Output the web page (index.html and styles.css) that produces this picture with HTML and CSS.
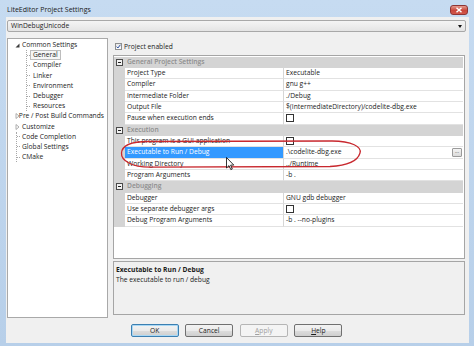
FILE: index.html
```html
<!DOCTYPE html>
<html lang="en">
<head>
    <meta charset="UTF-8">
    <title>LiteEditor Project Settings</title>
    <link rel="stylesheet" href="styles.css">
</head>
<body>

<div class="window">

  <div class="titlebar">
    <span class="title">LiteEditor Project Settings</span>
    <span class="close">
      <svg width="8" height="6" viewBox="0 0 8 6"><path d="M1.5 0.8 L6.5 5.2 M6.5 0.8 L1.5 5.2" stroke="#fff" stroke-width="1.5"/></svg>
    </span>
  </div>

  <div class="client">

    <div class="combo">
      <span>WinDebugUnicode</span>
      <span class="combo__arrow"></span>
    </div>

    <div class="main">

      <div class="tree">
        <div class="node node--root">
          <span class="exp">
            <svg width="5" height="5" viewBox="0 0 5 5"><path d="M4.5 0.5 L4.5 4.5 L0.5 4.5 Z" fill="#3c3c3c"/></svg>
          </span>
          <span class="node__text">Common Settings</span>
        </div>
        <div class="children">
          <div class="node node--child"><span class="node__text node__text--selected">General</span></div>
          <div class="node node--child"><span class="node__text">Compiler</span></div>
          <div class="node node--child"><span class="node__text">Linker</span></div>
          <div class="node node--child"><span class="node__text">Environment</span></div>
          <div class="node node--child"><span class="node__text">Debugger</span></div>
          <div class="node node--child"><span class="node__text">Resources</span></div>
        </div>
        <div class="node node--root">
          <span class="exp">
            <svg width="5" height="6" viewBox="0 0 5 6"><path d="M1 0.5 L4 3 L1 5.5 Z" fill="none" stroke="#9a9a9a" stroke-width="0.8"/></svg>
          </span>
          <span class="node__text">Pre / Post Build Commands</span>
        </div>
        <div class="node node--root">
          <span class="exp">
            <svg width="5" height="6" viewBox="0 0 5 6"><path d="M1 0.5 L4 3 L1 5.5 Z" fill="none" stroke="#9a9a9a" stroke-width="0.8"/></svg>
          </span>
          <span class="node__text">Customize</span>
        </div>
        <div class="tree-tail">
          <div class="node node--leaf"><span class="node__text">Code Completion</span></div>
          <div class="node node--leaf"><span class="node__text">Global Settings</span></div>
          <div class="node node--leaf"><span class="node__text">CMake</span></div>
        </div>
      </div>

      <div class="side">

        <div class="check-row">
          <span class="checkbox">
            <svg width="5" height="5" viewBox="0 0 5 5"><path d="M0.6 2.6 L1.9 4 L4.4 0.8" fill="none" stroke="#2a4fa0" stroke-width="1"/></svg>
          </span>
          Project enabled
        </div>

        <div class="grid">
          <div class="row row--cat">
            <span class="gutter"><span class="toggle"></span></span>
            <span class="cat">General Project Settings</span>
          </div>
          <div class="row"><span class="gutter"></span><span class="label">Project Type</span><span class="value">Executable</span></div>
          <div class="row"><span class="gutter"></span><span class="label">Compiler</span><span class="value">gnu g++</span></div>
          <div class="row"><span class="gutter"></span><span class="label">Intermediate Folder</span><span class="value">./Debug</span></div>
          <div class="row"><span class="gutter"></span><span class="label">Output File</span><span class="value">$(IntermediateDirectory)/codelite-dbg.exe</span></div>
          <div class="row"><span class="gutter"></span><span class="label">Pause when execution ends</span><span class="value"><span class="box"></span></span></div>

          <div class="row row--cat">
            <span class="gutter"><span class="toggle"></span></span>
            <span class="cat">Execution</span>
          </div>
          <div class="row"><span class="gutter"></span><span class="label">This program is a GUI application</span><span class="value"><span class="box"></span></span></div>
          <div class="row"><span class="gutter"></span><span class="label label--selected">Executable to Run / Debug</span><span class="value">.\codelite-dbg.exe<span class="dots">...</span></span></div>
          <div class="row"><span class="gutter"></span><span class="label">Working Directory</span><span class="value">../Runtime</span></div>
          <div class="row"><span class="gutter"></span><span class="label">Program Arguments</span><span class="value">-b .</span></div>

          <div class="row row--cat">
            <span class="gutter"><span class="toggle"></span></span>
            <span class="cat">Debugging</span>
          </div>
          <div class="row"><span class="gutter"></span><span class="label">Debugger</span><span class="value">GNU gdb debugger</span></div>
          <div class="row"><span class="gutter"></span><span class="label">Use separate debugger args</span><span class="value"><span class="box"></span></span></div>
          <div class="row"><span class="gutter"></span><span class="label">Debug Program Arguments</span><span class="value">-b . --no-plugins</span></div>
        </div>

        <div class="desc">
          <div class="desc__title">Executable to Run / Debug</div>
          <div>The executable to run / debug</div>
        </div>

      </div>
    </div>

    <div class="buttons">
      <button class="btn btn--default">OK</button>
      <button class="btn">Cancel</button>
      <button class="btn btn--disabled"><u>A</u>pply</button>
      <button class="btn"><u>H</u>elp</button>
    </div>

  </div>

  <!-- red marker drawn over the screenshot -->
  <svg class="marker" width="474" height="346" viewBox="0 0 474 346">
    <path d="M148 141.5 L332 141 C352 141 362 147 360 153 C358 160 350 165.5 330 166.5 L150 167.2 C131 167.2 121 160 121.5 153 C122 146 131 141.6 148 141.5 Z"
          fill="none" stroke="#c8282e" stroke-width="1.3"/>
  </svg>

  <svg class="pointer" width="9" height="14" viewBox="0 0 9 14">
    <path d="M0.5 0.5 L0.5 11 L3 8.6 L4.8 12.6 L6.3 12 L4.6 8.1 L7.8 8.1 Z" fill="#fff" stroke="#000" stroke-width="0.8"/>
  </svg>

</div>

</body>
</html>
```

FILE: styles.css
```css
*,
*::before,
*::after {
  box-sizing: border-box;
}

html,
body {
  margin: 0;
}

body {
  width: 474px;
  height: 346px;
  overflow: hidden;
  font-family: "Segoe UI", "Open Sans", sans-serif;
  font-size: 6.7px;
  color: #1b1b1b;
  background: #b9d1ea;
}

.window {
  position: relative;
  width: 474px;
  height: 346px;
  display: flex;
  flex-direction: column;
  background: linear-gradient(#c6dbf1, #b7cfe9);
}

.titlebar {
  height: 17px;
  display: flex;
  justify-content: space-between;
  padding: 0 6px 0 7px;
}

.title {
  font-size: 7px;
  line-height: 10px;
  padding-top: 5px;
  color: #1a1a1a;
}

.close {
  margin-top: 5px;
  width: 18px;
  height: 10px;
  border: 1px solid #8d3434;
  border-radius: 3px;
  background: linear-gradient(#e49a8e, #c9463b 55%, #d2574a);
  display: flex;
  align-items: center;
  justify-content: center;
}

.client {
  flex: 1;
  margin: 0 5px 3px 6px;
  padding: 3px 3px 6px 1px;
  background: #f0f0f0;
  display: flex;
  flex-direction: column;
}

/* configuration combo */

.combo {
  height: 12px;
  border: 1px solid #a8a8a8;
  border-radius: 2px;
  background: linear-gradient(#f4f4f4, #e4e4e4);
  display: flex;
  align-items: center;
  justify-content: space-between;
  padding: 0 3px 0 3px;
  line-height: 10px;
}

.combo__arrow {
  width: 0;
  height: 0;
  border-left: 2.5px solid transparent;
  border-right: 2.5px solid transparent;
  border-top: 3px solid #111;
}

.main {
  display: flex;
  margin-top: 6px;
  height: 280px;
}

/* tree */

.tree {
  width: 101px;
  height: 280px;
  background: #fff;
  border: 1px solid #a9a9a9;
  padding-top: 1px;
}

.node {
  height: 10.2px;
  line-height: 10.2px;
  display: flex;
  align-items: center;
  white-space: nowrap;
}

.node__text {
  padding: 0 2px;
  border: 1px solid transparent;
  line-height: 8px;
}

.node--root .exp {
  width: 9px;
  margin-left: 7px;
  display: flex;
  align-items: center;
}

.node--root .node__text {
  margin-left: -5px;
}

.children {
  margin-left: 18px;
  border-left: 1px dotted #a8a8a8;
}

.node--child::before,
.node--leaf::before {
  content: "";
  width: 3px;
  border-top: 1px dotted #a8a8a8;
}

.node__text--selected {
  border-color: #bdbdbd;
  background: #f6f6f6;
}

.tree-tail {
  margin-left: 8px;
  border-left: 1px dotted #a8a8a8;
}

.node--leaf .node__text {
  margin-left: -1px;
}

/* right side */

.side {
  margin-left: 5px;
  width: 352px;
  padding-top: 3px;
  display: flex;
  flex-direction: column;
}

.check-row {
  height: 10px;
  margin-bottom: 4px;
  padding-left: 2px;
  display: flex;
  align-items: center;
  gap: 2px;
}

.checkbox {
  width: 7px;
  height: 7px;
  border: 1px solid #8e8f8f;
  background: linear-gradient(#e8e8e8, #fdfdfd);
  display: flex;
  align-items: center;
  justify-content: center;
}

.grid {
  height: 204px;
  border: 1px solid #a5a5a5;
  background: #fff;
  padding: 0.6px 1px 0 0;
}

.row {
  height: 11.33px;
  display: flex;
  line-height: 10.3px;
  white-space: nowrap;
}

.gutter {
  width: 11px;
  flex: none;
  background: #d4d4d4;
  display: flex;
  align-items: center;
  justify-content: center;
}

.toggle {
  width: 7px;
  height: 7px;
  border: 1px solid #4a4a4a;
  background: #f2f2f2;
  position: relative;
}

.toggle::after {
  content: "";
  position: absolute;
  left: 1px;
  right: 1px;
  top: 2px;
  height: 1px;
  background: #222;
}

.row--cat .cat {
  flex: 1;
  background: #d4d4d4;
  color: #8e8e8e;
  font-weight: 600;
  padding-left: 2px;
}

.label {
  width: 159px;
  flex: none;
  padding-left: 2px;
  border-right: 1px solid #d6d6d6;
  border-bottom: 1px solid #e2e2e2;
  overflow: hidden;
}

.label--selected {
  background: #3399ff;
  color: #fff;
}

.value {
  flex: 1;
  padding-left: 2px;
  border-bottom: 1px solid #e2e2e2;
  display: flex;
  align-items: center;
  justify-content: space-between;
}

.box {
  width: 8px;
  height: 8px;
  border: 1px solid #333;
  background: #fff;
}

.dots {
  width: 10px;
  height: 9px;
  margin-right: 1px;
  border: 1px solid #9a9a9a;
  border-radius: 1px;
  background: linear-gradient(#f4f4f4, #dadada);
  font-size: 5px;
  line-height: 5px;
  text-align: center;
  color: #333;
}

.desc {
  margin-top: 2px;
  height: 54px;
  border: 1px solid #a5a5a5;
  padding: 3px 2px;
  line-height: 10px;
}

.desc__title {
  font-weight: 700;
}

/* dialog buttons */

.buttons {
  margin-top: 6px;
  display: flex;
  justify-content: center;
  gap: 6.6px;
}

.btn {
  width: 48px;
  height: 13px;
  padding: 0;
  font: inherit;
  color: #1b1b1b;
  border: 1px solid #707070;
  border-radius: 2px;
  background: linear-gradient(#f2f2f2 0%, #ebebeb 50%, #dddddd 51%, #cfcfcf 100%);
}

.btn u {
  text-decoration: underline;
}

.btn--default {
  border-color: #3c7fb1;
  box-shadow: inset 0 0 0 1px #a9d8f5;
}

.btn--disabled {
  color: #a0a0a0;
  border-color: #b5b5b5;
  background: #f4f4f4;
}

/* overlays */

.marker {
  position: absolute;
  left: 0;
  top: 0;
  pointer-events: none;
}

.pointer {
  position: absolute;
  left: 226px;
  top: 157px;
}
```
